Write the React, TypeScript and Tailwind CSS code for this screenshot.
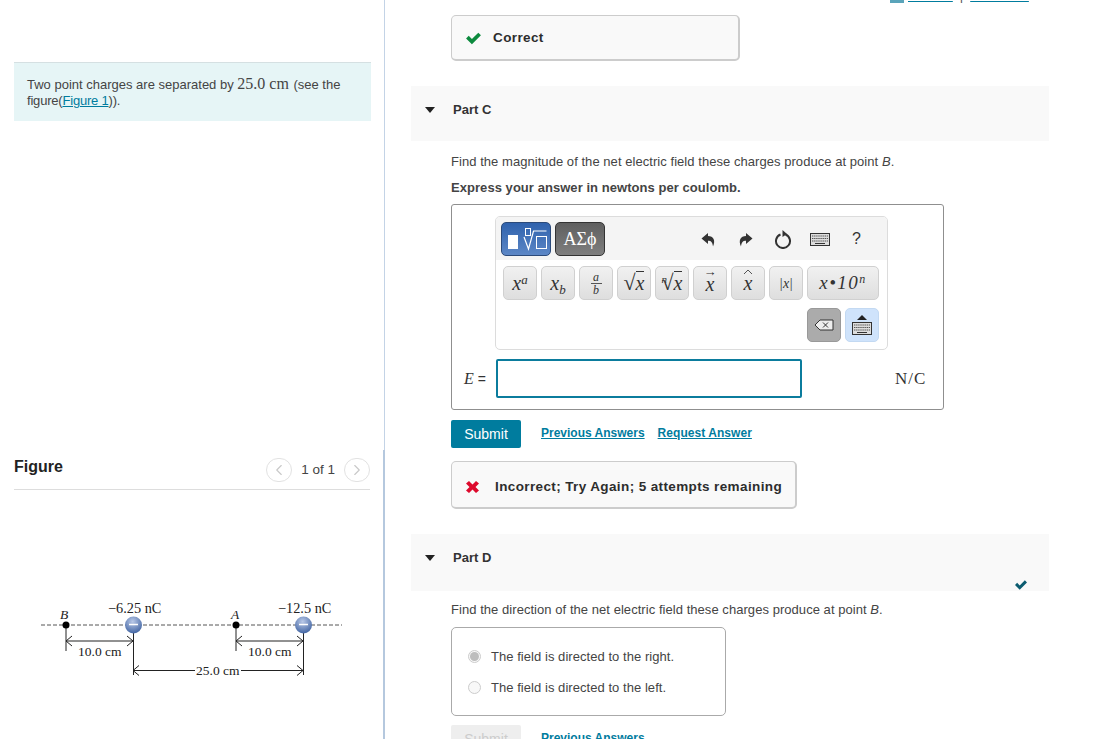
import { ChevronLeft, ChevronRight } from "lucide-react";

const serif = "font-['Liberation_Serif',serif]";

const Keyboard = ({ x = 0, y = 0 }: { x?: number; y?: number }) => (
  <g transform={`translate(${x} ${y})`}>
    <rect x="0.5" y="0.5" width="19" height="12" fill="#ddd" stroke="#333" />
    <path d="M2 3h16M2 5.500h16M2 8h16" stroke="#555" strokeWidth="1.200" strokeDasharray="1.400 .7" />
    <path d="M5 10.500h10" stroke="#333" strokeWidth="1.200" />
  </g>
);

const MathKey = ({ children, wide }: { children: React.ReactNode; wide?: boolean }) => (
  <div
    className={`${wide ? "w-[72px]" : "w-[34px]"} h-[34px] flex items-center justify-center rounded-[5px] border border-[#d0d0d0] bg-gradient-to-b from-[#f1f1f1] to-[#dedede] text-[#333] ${serif} italic`}
  >
    {children}
  </div>
);

const ToolIcon = ({ children }: { children: React.ReactNode }) => (
  <div className="w-[37px] flex justify-center items-center">{children}</div>
);

const Toolbar = () => (
  <div className="ml-[43px] w-[393px] h-[134px] border border-[#dcdcdc] rounded-[5px] overflow-hidden">
    <div className="h-[43px] bg-[#f4f4f4] pl-[5px] pt-[5px] flex items-start gap-1">
      <div className="w-[50px] h-[34px] rounded-[5px] border border-[#2b4a7a] bg-gradient-to-b from-[#2f62ad] to-[#5c87c6]">
        <svg width="48" height="32" viewBox="1 1 48 32" fill="none">
          <rect x="7" y="13" width="10" height="14" fill="#fff" />
          <rect x="24.500" y="6.500" width="5" height="7" stroke="#fff" />
          <path d="M23 15l4.500 12 5-18h13" stroke="#fff" strokeWidth="1.200" />
          <rect x="35.500" y="14.500" width="10" height="12" stroke="#fff" />
        </svg>
      </div>
      <div className={`w-[50px] h-[34px] rounded-[5px] border border-[#333] bg-gradient-to-b from-[#5f5f5f] to-[#7f7f7f] flex items-center justify-center text-white text-[18px] ${serif}`}>
        ΑΣϕ
      </div>
      <div className="ml-[81px] flex items-center h-[34px]">
        <ToolIcon>
          <svg width="17" height="17" viewBox="0 0 17 17" fill="#333">
            <path d="M8 2L1.500 7.500 8 13V9.800c3 0 4.500 1.200 5 5.700 2.800-6 .5-10.500-5-10.500z" />
          </svg>
        </ToolIcon>
        <ToolIcon>
          <svg width="17" height="17" viewBox="0 0 17 17" fill="#333">
            <path d="M9 2l6.500 5.500L9 13V9.800c-3 0-4.500 1.200-5 5.700-2.800-6-.5-10.500 5-10.500z" />
          </svg>
        </ToolIcon>
        <ToolIcon>
          <svg width="18" height="20" viewBox="0 0 18 20" fill="none">
            <path d="M6.500 5.500a7 7 0 1 0 5 0" stroke="#333" strokeWidth="2" />
            <path d="M8.500 1l4.500 4-4.500 3z" fill="#333" />
          </svg>
        </ToolIcon>
        <ToolIcon>
          <svg width="20" height="13" viewBox="0 0 20 13">
            <Keyboard />
          </svg>
        </ToolIcon>
        <ToolIcon>
          <span className="text-[16px] text-[#333]">?</span>
        </ToolIcon>
      </div>
    </div>
    <div className="pt-[6px] pl-[7px] flex gap-1">
      <MathKey>
        <span className="text-[20px]">x<sup className="text-[13px] -top-1.5 relative align-baseline">a</sup></span>
      </MathKey>
      <MathKey>
        <span className="text-[20px]">x<sub className="text-[13px] top-1 relative align-baseline">b</sub></span>
      </MathKey>
      <MathKey>
        <div className="flex flex-col items-center text-[12px] leading-[12px]">
          <span>a</span>
          <span className="w-[11px] h-px bg-[#555]" />
          <span>b</span>
        </div>
      </MathKey>
      <MathKey>
        <span className="text-[22px] not-italic leading-[22px]">√<span className="italic border-t border-[#333] text-[20px]">x</span></span>
      </MathKey>
      <MathKey>
        <span className="text-[22px] not-italic relative leading-[22px]">
          <span className="absolute italic text-[11px] left-0 -top-1">n</span>√<span className="italic border-t border-[#333] text-[20px]">x</span>
        </span>
      </MathKey>
      <MathKey>
        <div className="flex flex-col items-center -mt-[6px]">
          <span className="text-[13px] leading-[8px] not-italic">→</span>
          <span className="text-[20px] leading-[16px]">x</span>
        </div>
      </MathKey>
      <MathKey>
        <div className="flex flex-col items-center -mt-[6px]">
          <svg width="10" height="6" viewBox="0 0 10 6" fill="none"><path d="M1 5l4-4 4 4" stroke="#555" /></svg>
          <span className="text-[20px] leading-[16px]">x</span>
        </div>
      </MathKey>
      <MathKey>
        <span className="text-[14px]">|x|</span>
      </MathKey>
      <MathKey wide>
        <span className="text-[19px] tracking-[1.500px]">x•10<sup className="text-[12px] -top-1.5 relative align-baseline">n</sup></span>
      </MathKey>
    </div>
    <div className="pt-2 pl-[311px] flex gap-1">
      <div className="w-[34px] h-[34px] rounded-[5px] border border-[#999] bg-[#ababab] flex items-center justify-center">
        <svg width="20" height="12" viewBox="0 0 20 12" fill="none">
          <path d="M6 1h13v10H6L1 6z" fill="#eee" stroke="#333" />
          <path d="M9 3.500l5 5M14 3.500l-5 5" stroke="#333" />
        </svg>
      </div>
      <div className="w-[34px] h-[34px] rounded-[5px] border border-[#c3d9f2] bg-[#cfe3fb] flex items-center justify-center">
        <svg width="20" height="22" viewBox="0 0 20 22">
          <path d="M10 1l5 5H5z" fill="#222" />
          <Keyboard x={0} y={8} />
        </svg>
      </div>
    </div>
  </div>
);

const Feedback = ({ width, icon, text, indent, pad }: { width: string; icon: React.ReactNode; text: string; indent: string; pad: string }) => (
  <div className={`${width} ${pad} h-full flex items-center rounded-[5px] border border-[#ccc] border-r-2 border-b-2 bg-[#f9f9f9] pl-[13px]`}>
    {icon}
    <span className={`${indent} font-bold text-[13.500px] tracking-[0.38px] text-[#2d2d2d]`}>{text}</span>
  </div>
);

const PartHeader = ({ title, pad }: { title: string; pad: string }) => (
  <div className={`w-[638px] bg-[#f9f9f9] flex items-center pl-[14px] ${pad} h-full`}>
    <span className="w-0 h-0 border-x-[5px] border-x-transparent border-t-[6px] border-t-[#222]" />
    <span className="ml-[18px] font-bold text-[13px] text-[#333]">{title}</span>
  </div>
);

const Radio = ({ checked, label }: { checked?: boolean; label: string }) => (
  <div className="flex items-center h-[31px]">
    <span className="w-[13px] h-[13px] rounded-full border border-[#ccc] flex items-center justify-center bg-[#f8f8f8]">
      {checked && <span className="w-[9px] h-[9px] rounded-full bg-[#bdbdbd]" />}
    </span>
    <span className="ml-[10px] text-[13px] tracking-[0.05px] text-[#444]">{label}</span>
  </div>
);

const Diagram = () => (
  <svg width="370" height="200" viewBox="0 490 370 200" className={serif}>
    <defs>
      <radialGradient id="ball" cx="45%" cy="30%" r="75%">
        <stop offset="0%" stopColor="#b9c9e8" />
        <stop offset="100%" stopColor="#3b5f9f" />
      </radialGradient>
    </defs>
    <path d="M41 625h301" stroke="#555" strokeDasharray="4 2" />
    <path d="M66 625v26M133.500 625v50M236 625v26M303.500 625v50" stroke="#222" />
    <path d="M66 641h67M236 641h67M133 670.500h62M241 670.500h62" stroke="#222" />
    <path d="M72 636l-6 5 6 5M127 636l6 5-6 5M242 636l-6 5 6 5M297 636l6 5-6 5M139 665.500l-6 5 6 5M297 665.500l6 5-6 5" stroke="#222" fill="none" />
    <circle cx="66" cy="625" r="3.500" fill="#000" />
    <circle cx="236" cy="625" r="3.500" fill="#000" />
    <circle cx="133.500" cy="625" r="8.500" fill="url(#ball)" />
    <circle cx="303.500" cy="625" r="8.500" fill="url(#ball)" />
    <path d="M129 624.500h9M299 624.500h9" stroke="#fff" strokeWidth="1.500" />
    <g fontSize="13.500" fill="#222">
      <text x="60" y="619" fontStyle="italic">B</text>
      <text x="231" y="619" fontStyle="italic">A</text>
      <text x="108" y="613" fontSize="14.300">−6.25 nC</text>
      <text x="278" y="613" fontSize="14.300">−12.5 nC</text>
      <text x="78" y="656">10.0 cm</text>
      <text x="248" y="656">10.0 cm</text>
      <text x="196" y="675">25.0 cm</text>
    </g>
  </svg>
);

export default function App() {
  return (
    <div className="w-[1094px] h-[739px] overflow-hidden bg-white flex font-['Liberation_Sans',sans-serif] text-[13px] text-[#333]">
      <div className="w-[385px] shrink-0 h-full relative border-r border-[#c3d3e6]">
        <div className="absolute right-[-1px] top-[450px] bottom-0 w-[2px] bg-[#b5c8de]" />
        <div className="ml-[14px] mt-[62px] w-[357px] h-[59px] bg-[#e6f5f6] border-t border-[#d5e0e2] pl-[13px] pt-[13px] text-[#444] leading-[16px] text-[13px]">
          Two point charges are separated by <span className={`${serif} text-[16px] leading-none mr-[1px]`}>25.0 cm</span> (see the <span className="tracking-[-0.2px]">figure(<a className="text-[#007c9e] underline">Figure 1</a>)).</span>
        </div>
        <div className="ml-[14px] mt-[335px] w-[356px] h-[34px] border-b border-[#ddd] flex items-start">
          <span className="font-bold text-[16px] text-[#222] leading-[22px]">Figure</span>
          <div className="ml-auto flex items-center h-[24px] pt-[4px]">
            <span className="w-[26px] h-[24px] rounded-full border border-[#e2e2e2] flex items-center justify-center text-[#c8c8c8]">
              <ChevronLeft size={18} strokeWidth={1.500} />
            </span>
            <span className="mx-[9px] text-[13.500px] text-[#444] pt-px">1 of 1</span>
            <span className="w-[26px] h-[24px] rounded-full border border-[#e2e2e2] flex items-center justify-center text-[#c8c8c8]">
              <ChevronRight size={18} strokeWidth={1.500} />
            </span>
          </div>
        </div>
        <Diagram />
      </div>

      <div className="flex-1 pl-[26px]">
        <div className="h-[15px] relative">
          <div className="absolute left-[479px] -top-[14px] w-[160px] flex items-center text-[13px] font-bold text-[#007c9e]">
            <span className="w-[14px] h-[14px] bg-[#5aa4ba] mr-[4px]" />
            <a className="underline">Review</a>
            <span className="mx-[7px] font-normal text-[#555]">|</span>
            <a className="underline text-[12px]">Constants</a>
          </div>
        </div>
        <div className="ml-[40px] h-[46px]">
          <Feedback
            width="w-[289px]"
            pad="pt-[2px]"
            text="Correct"
            indent="ml-[11px]"
            icon={
              <svg width="17" height="15" viewBox="0 0 16 14">
                <path d="M1 7l2.500-2.500L6.500 7.500 12.500 1.500 15 4l-8.500 8.500z" fill="#0d8a3e" />
              </svg>
            }
          />
        </div>
        <div className="h-[55px] mt-[25px]">
          <PartHeader title="Part C" pad="pb-[8px]" />
        </div>
        <div className="ml-[40px] mt-[12px] text-[13px] tracking-[0.05px] text-[#444] leading-[18px]">
          Find the magnitude of the net electric field these charges produce at point <i>B</i>.
        </div>
        <div className="ml-[40px] mt-[8px] font-bold text-[13px] tracking-[0.05px] text-[#444] leading-[18px]">
          Express your answer in newtons per coulomb.
        </div>
        <div className="ml-[40px] mt-[7px] w-[493px] h-[206px] border border-[#8f8f8f] rounded-[3px] pt-[11px]">
          <Toolbar />
          <div className="flex items-center mt-[9px] pl-[12px]">
            <span className="w-[32px] text-[14px] text-[#333]">
              <i className={`${serif} text-[16px]`}>E</i> =
            </span>
            <div className="w-[306px] h-[39px] border-2 border-[#0b7c9d] rounded-[2px] bg-white" />
            <span className={`ml-[93px] ${serif} text-[17px] tracking-[1px]`}>N/C</span>
          </div>
        </div>
        <div className="ml-[40px] mt-[10px] flex items-start">
          <div className="w-[70px] h-[28px] rounded-[2px] bg-[#007c9e] text-white text-[14px] flex items-center justify-center">Submit</div>
          <a className="ml-[20px] font-bold text-[12px] text-[#007c9e] underline leading-[26px]">Previous Answers</a>
          <a className="ml-[13px] font-bold text-[12px] tracking-[0.05px] text-[#007c9e] underline leading-[26px]">Request Answer</a>
        </div>
        <div className="ml-[40px] mt-[13px] h-[48px]">
          <Feedback
            width="w-[346px]"
            pad="pt-[5px]"
            text="Incorrect; Try Again; 5 attempts remaining"
            indent="ml-[15px]"
            icon={
              <svg width="15" height="14" viewBox="0 0 15 14">
                <path d="M4 1l3.500 3.500L11 1l3 2.500L10.500 7 14 10.500 11 13 7.500 9.500 4 13l-3-2.500L4.500 7 1 3.500z" fill="#dd0a2d" />
              </svg>
            }
          />
        </div>
        <div className="h-[57px] mt-[25px] relative">
          <PartHeader title="Part D" pad="pb-[10px]" />
          <svg className="absolute left-[603px] top-[45px]" width="14" height="12" viewBox="0 0 16 14">
            <path d="M1 7l2.500-2.500L6.500 7.500 12.500 1.500 15 4l-8.500 8.500z" fill="#0b5c70" />
          </svg>
        </div>
        <div className="ml-[40px] mt-[10px] text-[13px] tracking-[0.05px] text-[#444] leading-[18px]">
          Find the direction of the net electric field these charges produce at point <i>B</i>.
        </div>
        <div className="ml-[40px] mt-[8px] w-[275px] h-[89px] border border-[#aaa] rounded-[5px] pl-[16px] pt-[13px]">
          <Radio checked label="The field is directed to the right." />
          <Radio label="The field is directed to the left." />
        </div>
        <div className="ml-[40px] mt-[9px] flex items-start">
          <div className="w-[70px] h-[28px] rounded-[2px] bg-[#eeeeee] text-[#cccccc] text-[14px] flex items-center justify-center">Submit</div>
          <a className="ml-[20px] font-bold text-[12px] text-[#007c9e] underline leading-[26px]">Previous Answers</a>
        </div>
      </div>
    </div>
  );
}
